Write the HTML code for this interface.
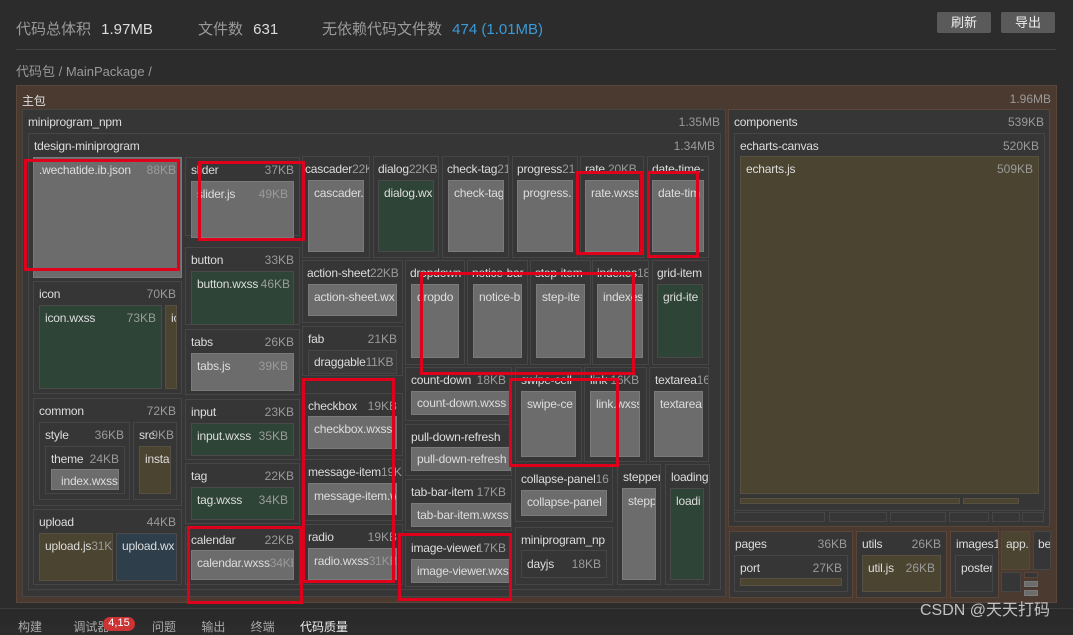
<!DOCTYPE html>
<html><head><meta charset="utf-8"><style>
*{margin:0;padding:0;box-sizing:border-box}
body{width:1073px;height:625px;background:#2c2c2c;font-family:"Liberation Sans","Noto Sans CJK SC",sans-serif;position:relative;overflow:hidden;color:#ddd}
.t{position:absolute;white-space:nowrap}
.b{position:absolute;background:#363636;border:1px solid #464646;overflow:hidden;font-size:12px;color:#ddd}
.b>.n{position:absolute;left:5px;top:5px;white-space:nowrap;letter-spacing:-0.2px}
.b>.s{position:absolute;right:5px;top:5px;color:#9a9a9a;white-space:nowrap}
.g{background:#6c6c6c;border-color:#7a7a7a}
.gr{background:#2e4437;border-color:#4a4a4a}
.ol{background:#4b4430;border-color:#585040}
.bl{background:#2e3f4b;border-color:#4a4a4a}
.br{border-color:#5b4538}
.r{position:absolute;border:3px solid #e0001b}
.btn{position:absolute;top:12px;height:21px;width:54px;background:#5a5a5a;border-radius:2px;color:#eee;font-size:13px;text-align:center;line-height:21px}
</style></head><body>
<div class="t" style="left:16px;top:18px;font-size:15px;color:#9a9a9a">代码总体积 <span style="color:#ddd;margin-left:6px">1.97MB</span></div>
<div class="t" style="left:198px;top:18px;font-size:15px;color:#9a9a9a">文件数 <span style="color:#ddd;margin-left:6px">631</span></div>
<div class="t" style="left:322px;top:18px;font-size:15px;color:#9a9a9a">无依赖代码文件数 <span style="color:#3a9ad9;margin-left:6px">474 (1.01MB)</span></div>
<div class="btn" style="left:937px">刷新</div>
<div class="btn" style="left:1001px">导出</div>
<div style="position:absolute;left:16px;top:49px;width:1040px;height:1px;background:#444"></div>
<div class="t" style="left:16px;top:61px;font-size:13px;color:#999">代码包 / MainPackage /</div>

<div class="b" style="left:16px;top:85px;width:1041px;height:518px;background:#4a3a30;border-color:#5a463a"><span class="n" style="top:6px">主包</span><span class="s" style="top:6px">1.96MB</span></div>
<div class="b" style="left:22px;top:109px;width:704px;height:488px"><span class="n">miniprogram_npm</span><span class="s">1.35MB</span></div>
<div class="b" style="left:28px;top:133px;width:693px;height:457px"><span class="n">tdesign-miniprogram</span><span class="s">1.34MB</span></div>

<!-- col1 -->
<div class="b g" style="left:33px;top:157px;width:149px;height:121px"><span class="n">.wechatide.ib.json</span><span class="s">88KB</span></div>
<div class="b" style="left:33px;top:281px;width:149px;height:113px"><span class="n">icon</span><span class="s">70KB</span></div>
<div class="b gr" style="left:39px;top:305px;width:123px;height:84px"><span class="n">icon.wxss</span><span class="s">73KB</span></div>
<div class="b ol" style="left:165px;top:305px;width:12px;height:84px"><span class="n">ic</span></div>
<div class="b" style="left:33px;top:398px;width:149px;height:108px"><span class="n">common</span><span class="s">72KB</span></div>
<div class="b" style="left:39px;top:422px;width:91px;height:78px"><span class="n">style</span><span class="s">36KB</span></div>
<div class="b" style="left:45px;top:446px;width:80px;height:48px"><span class="n">theme</span><span class="s">24KB</span></div>
<div class="b g" style="left:51px;top:469px;width:68px;height:21px"><span class="n" style="left:9px;top:4px">index.wxss</span></div>
<div class="b" style="left:133px;top:422px;width:44px;height:78px"><span class="n">src</span><span class="s" style="right:2px">9KB</span></div>
<div class="b ol" style="left:139px;top:446px;width:32px;height:48px"><span class="n">insta</span></div>
<div class="b" style="left:33px;top:509px;width:149px;height:76px"><span class="n">upload</span><span class="s">44KB</span></div>
<div class="b ol" style="left:39px;top:533px;width:74px;height:48px"><span class="n">upload.js<span style="color:#9a9a9a">31K</span></span></div>
<div class="b bl" style="left:116px;top:533px;width:61px;height:48px"><span class="n">upload.wx</span></div>

<!-- col2 -->
<div class="b" style="left:185px;top:157px;width:115px;height:79px"><span class="n">slider</span><span class="s">37KB</span></div>
<div class="b g" style="left:191px;top:181px;width:103px;height:57px"><span class="n">slider.js</span><span class="s">49KB</span></div>
<div class="b" style="left:185px;top:247px;width:115px;height:78px"><span class="n">button</span><span class="s">33KB</span></div>
<div class="b gr" style="left:191px;top:271px;width:103px;height:54px"><span class="n">button.wxss</span><span class="s" style="right:3px">46KB</span></div>
<div class="b" style="left:185px;top:329px;width:115px;height:66px"><span class="n">tabs</span><span class="s">26KB</span></div>
<div class="b g" style="left:191px;top:353px;width:103px;height:38px"><span class="n">tabs.js</span><span class="s">39KB</span></div>
<div class="b" style="left:185px;top:399px;width:115px;height:61px"><span class="n">input</span><span class="s">23KB</span></div>
<div class="b gr" style="left:191px;top:423px;width:103px;height:33px"><span class="n">input.wxss</span><span class="s">35KB</span></div>
<div class="b" style="left:185px;top:463px;width:115px;height:61px"><span class="n">tag</span><span class="s">22KB</span></div>
<div class="b gr" style="left:191px;top:487px;width:103px;height:33px"><span class="n">tag.wxss</span><span class="s">34KB</span></div>
<div class="b" style="left:185px;top:527px;width:115px;height:58px"><span class="n">calendar</span><span class="s">22KB</span></div>
<div class="b g" style="left:191px;top:550px;width:103px;height:30px"><span class="n">calendar.wxss<span style="color:#9a9a9a">34KB</span></span></div>

<!-- row1 col3 -->
<div class="b" style="left:302px;top:156px;width:68px;height:102px"><span class="n" style="left:2px">cascader<span style="color:#9a9a9a">22KB</span></span></div>
<div class="b g" style="left:308px;top:180px;width:56px;height:72px"><span class="n">cascader.</span></div>
<div class="b" style="left:373px;top:156px;width:66px;height:102px"><span class="n" style="left:4px">dialog<span style="color:#9a9a9a">22KB</span></span></div>
<div class="b gr" style="left:378px;top:180px;width:56px;height:72px"><span class="n">dialog.wx</span></div>
<div class="b" style="left:442px;top:156px;width:67px;height:102px"><span class="n" style="left:4px">check-tag<span style="color:#9a9a9a">21</span></span></div>
<div class="b g" style="left:448px;top:180px;width:56px;height:72px"><span class="n">check-tag</span></div>
<div class="b" style="left:512px;top:156px;width:66px;height:102px"><span class="n" style="left:4px">progress<span style="color:#9a9a9a">21</span></span></div>
<div class="b g" style="left:517px;top:180px;width:56px;height:72px"><span class="n">progress.</span></div>
<div class="b" style="left:580px;top:156px;width:64px;height:102px"><span class="n" style="left:4px">rate <span style="color:#9a9a9a">20KB</span></span></div>
<div class="b g" style="left:585px;top:180px;width:54px;height:72px"><span class="n">rate.wxss</span></div>
<div class="b" style="left:647px;top:156px;width:62px;height:102px"><span class="n" style="left:4px">date-time-</span></div>
<div class="b g" style="left:652px;top:180px;width:52px;height:72px"><span class="n">date-tim</span></div>

<!-- row2 -->
<div class="b" style="left:302px;top:260px;width:101px;height:63px"><span class="n" style="left:4px">action-sheet<span style="color:#9a9a9a">22KB</span></span></div>
<div class="b g" style="left:308px;top:284px;width:89px;height:32px"><span class="n">action-sheet.wx</span></div>
<div class="b" style="left:405px;top:260px;width:60px;height:105px"><span class="n" style="left:4px">dropdown</span></div>
<div class="b g" style="left:411px;top:284px;width:48px;height:74px"><span class="n">dropdo</span></div>
<div class="b" style="left:467px;top:260px;width:61px;height:105px"><span class="n" style="left:4px">notice-bar</span></div>
<div class="b g" style="left:473px;top:284px;width:49px;height:74px"><span class="n">notice-b</span></div>
<div class="b" style="left:530px;top:260px;width:61px;height:105px"><span class="n" style="left:4px">step-item</span></div>
<div class="b g" style="left:536px;top:284px;width:49px;height:74px"><span class="n">step-ite</span></div>
<div class="b" style="left:592px;top:260px;width:57px;height:105px"><span class="n" style="left:4px">indexes<span style="color:#9a9a9a">18</span></span></div>
<div class="b g" style="left:597px;top:284px;width:46px;height:74px"><span class="n">indexes</span></div>
<div class="b" style="left:652px;top:260px;width:57px;height:105px"><span class="n" style="left:4px">grid-item</span></div>
<div class="b gr" style="left:657px;top:284px;width:46px;height:74px"><span class="n">grid-ite</span></div>

<!-- col3 lower -->
<div class="b" style="left:302px;top:326px;width:101px;height:50px"><span class="n">fab</span><span class="s">21KB</span></div>
<div class="b" style="left:308px;top:350px;width:89px;height:24px;background:#3a3a3a"><span class="n" style="top:4px">draggable<span style="color:#9a9a9a">11KB</span></span></div>
<div class="b" style="left:302px;top:393px;width:101px;height:63px"><span class="n">checkbox</span><span class="s">19KB</span></div>
<div class="b g" style="left:308px;top:416px;width:89px;height:33px"><span class="n">checkbox.wxss</span></div>
<div class="b" style="left:302px;top:459px;width:101px;height:62px"><span class="n">message-item<span style="color:#9a9a9a">19K</span></span></div>
<div class="b g" style="left:308px;top:483px;width:89px;height:32px"><span class="n">message-item.w</span></div>
<div class="b" style="left:302px;top:524px;width:101px;height:61px"><span class="n">radio</span><span class="s">19KB</span></div>
<div class="b g" style="left:308px;top:548px;width:89px;height:32px"><span class="n">radio.wxss<span style="color:#9a9a9a">31KB</span></span></div>

<div class="b" style="left:405px;top:367px;width:107px;height:54px"><span class="n">count-down</span><span class="s">18KB</span></div>
<div class="b g" style="left:411px;top:391px;width:100px;height:24px"><span class="n" style="top:4px">count-down.wxss</span></div>
<div class="b" style="left:405px;top:424px;width:107px;height:52px"><span class="n">pull-down-refresh</span></div>
<div class="b g" style="left:411px;top:447px;width:100px;height:24px"><span class="n" style="top:4px">pull-down-refresh</span></div>
<div class="b" style="left:405px;top:479px;width:107px;height:52px"><span class="n">tab-bar-item</span><span class="s">17KB</span></div>
<div class="b g" style="left:411px;top:503px;width:100px;height:24px"><span class="n" style="top:4px">tab-bar-item.wxss</span></div>
<div class="b" style="left:405px;top:535px;width:107px;height:52px"><span class="n">image-viewer</span><span class="s">17KB</span></div>
<div class="b g" style="left:411px;top:559px;width:100px;height:24px"><span class="n" style="top:4px">image-viewer.wxs</span></div>

<div class="b" style="left:515px;top:367px;width:67px;height:95px"><span class="n">swipe-cell</span></div>
<div class="b g" style="left:521px;top:391px;width:55px;height:66px"><span class="n">swipe-ce</span></div>
<div class="b" style="left:584px;top:367px;width:63px;height:95px"><span class="n">link <span style="color:#9a9a9a">16KB</span></span></div>
<div class="b g" style="left:590px;top:391px;width:50px;height:66px"><span class="n">link.wxss</span></div>
<div class="b" style="left:649px;top:367px;width:60px;height:95px"><span class="n">textarea<span style="color:#9a9a9a">16</span></span></div>
<div class="b g" style="left:654px;top:391px;width:49px;height:66px"><span class="n">textarea</span></div>
<div class="b" style="left:515px;top:466px;width:98px;height:56px"><span class="n">collapse-panel<span style="color:#9a9a9a">16</span></span></div>
<div class="b g" style="left:521px;top:490px;width:86px;height:26px"><span class="n" style="top:4px">collapse-panel</span></div>
<div class="b" style="left:515px;top:527px;width:98px;height:58px"><span class="n">miniprogram_np</span></div>
<div class="b" style="left:521px;top:550px;width:86px;height:28px"><span class="n" style="top:6px">dayjs</span><span class="s" style="top:6px">18KB</span></div>
<div class="b" style="left:617px;top:464px;width:44px;height:121px"><span class="n">stepper</span></div>
<div class="b g" style="left:622px;top:488px;width:34px;height:92px"><span class="n">stepp</span></div>
<div class="b" style="left:665px;top:464px;width:45px;height:121px"><span class="n">loading</span></div>
<div class="b gr" style="left:670px;top:488px;width:34px;height:92px"><span class="n">loadi</span></div>

<!-- right side -->
<div class="b br" style="left:728px;top:109px;width:322px;height:418px"><span class="n">components</span><span class="s">539KB</span></div>
<div class="b" style="left:734px;top:133px;width:311px;height:378px"><span class="n">echarts-canvas</span><span class="s">520KB</span></div>
<div class="b ol" style="left:740px;top:156px;width:299px;height:338px"><span class="n">echarts.js</span><span class="s">509KB</span></div>
<div class="b ol" style="left:740px;top:498px;width:220px;height:6px"></div>
<div class="b ol" style="left:963px;top:498px;width:56px;height:6px"></div>
<div class="b" style="left:734px;top:512px;width:91px;height:10px"></div>
<div class="b" style="left:829px;top:512px;width:58px;height:10px"></div>
<div class="b" style="left:890px;top:512px;width:56px;height:10px"></div>
<div class="b" style="left:949px;top:512px;width:40px;height:10px"></div>
<div class="b" style="left:992px;top:512px;width:28px;height:10px"></div>
<div class="b" style="left:1022px;top:512px;width:22px;height:10px"></div>

<div class="b br" style="left:729px;top:531px;width:124px;height:67px"><span class="n">pages</span><span class="s">36KB</span></div>
<div class="b" style="left:734px;top:555px;width:114px;height:37px"><span class="n">port</span><span class="s">27KB</span></div>
<div class="b ol" style="left:740px;top:578px;width:102px;height:8px"></div>
<div class="b br" style="left:856px;top:531px;width:91px;height:67px"><span class="n">utils</span><span class="s">26KB</span></div>
<div class="b ol" style="left:862px;top:555px;width:79px;height:37px"><span class="n">util.js</span><span class="s">26KB</span></div>
<div class="b br" style="left:950px;top:531px;width:49px;height:67px"><span class="n">images1</span></div>
<div class="b" style="left:955px;top:555px;width:38px;height:37px"><span class="n">poster</span></div>
<div class="b ol br" style="left:1001px;top:531px;width:29px;height:39px"><span class="n" style="left:4px">app.</span></div>
<div class="b" style="left:1033px;top:531px;width:18px;height:39px"><span class="n" style="left:4px">be</span></div>
<div class="b" style="left:1001px;top:572px;width:20px;height:20px"></div>
<div class="b br" style="left:1024px;top:572px;width:14px;height:6px"></div>
<div class="b g" style="left:1024px;top:581px;width:14px;height:6px"></div>
<div class="b g" style="left:1024px;top:590px;width:14px;height:6px"></div>

<!-- red annotations -->
<div class="r" style="left:24px;top:159px;width:156px;height:112px"></div>
<div class="r" style="left:198px;top:161px;width:107px;height:80px"></div>
<div class="r" style="left:576px;top:171px;width:67px;height:84px"></div>
<div class="r" style="left:647px;top:171px;width:52px;height:87px"></div>
<div class="r" style="left:420px;top:272px;width:215px;height:103px"></div>
<div class="r" style="left:302px;top:378px;width:93px;height:205px"></div>
<div class="r" style="left:187px;top:526px;width:116px;height:78px"></div>
<div class="r" style="left:398px;top:533px;width:114px;height:68px"></div>
<div class="r" style="left:509px;top:378px;width:110px;height:89px"></div>

<!-- bottom panel -->
<div style="position:absolute;left:0;top:608px;width:1073px;height:17px;background:#2a2a2a;border-top:1px solid #3c3c3c"></div>
<div class="t" style="left:18px;top:618px;font-size:12px;color:#aaa;word-spacing:28px">构建 调试器</div>
<div class="t" style="left:103px;top:617px;width:32px;height:14px;border-radius:7px;background:#c33;color:#fff;font-size:11px;text-align:center">4,15</div>
<div class="t" style="left:152px;top:618px;font-size:12px;color:#aaa;word-spacing:22px">问题 输出 终端 <span style="color:#eee">代码质量</span></div>
<div class="t" style="left:920px;top:596px;font-size:16px;color:rgba(230,230,230,0.8)">CSDN @天天打码</div>
</body></html>
